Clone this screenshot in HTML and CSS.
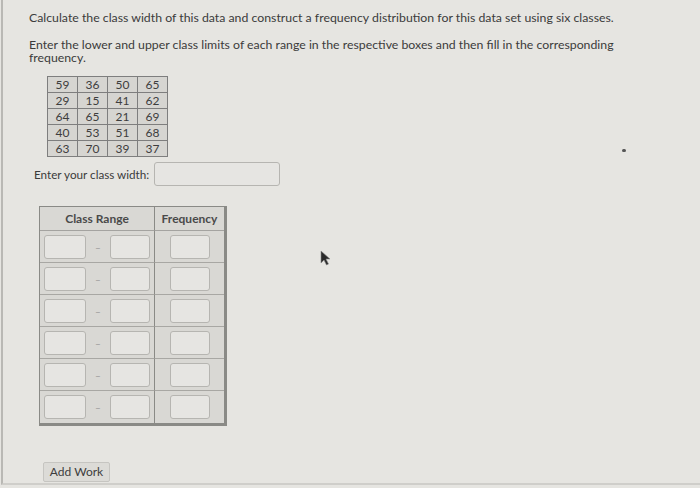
FILE: index.html
```html
<!DOCTYPE html>
<html>
<head>
<meta charset="utf-8">
<link rel="stylesheet" href="styles.css">
</head>
<body>
<div class="page">
  <p class="q1">Calculate the class width of this data and construct a frequency distribution for this data set using six classes.</p>
  <p class="q2">Enter the lower and upper class limits of each range in the respective boxes and then fill in the corresponding frequency.</p>
  <table class="data">
    <tr><td>59</td><td>36</td><td>50</td><td>65</td></tr>
    <tr><td>29</td><td>15</td><td>41</td><td>62</td></tr>
    <tr><td>64</td><td>65</td><td>21</td><td>69</td></tr>
    <tr><td>40</td><td>53</td><td>51</td><td>68</td></tr>
    <tr><td>63</td><td>70</td><td>39</td><td>37</td></tr>
  </table>
  <div class="width-row">
    <span>Enter your class width:</span>
    <div class="box wide"></div>
  </div>
  <table class="freq">
    <tr><th class="cr">Class Range</th><th class="fq">Frequency</th></tr>
    <tr><td class="range"><div class="box lo"></div><span class="dash">–</span><div class="box hi"></div></td><td class="fcell"><div class="box f"></div></td></tr>
    <tr><td class="range"><div class="box lo"></div><span class="dash">–</span><div class="box hi"></div></td><td class="fcell"><div class="box f"></div></td></tr>
    <tr><td class="range"><div class="box lo"></div><span class="dash">–</span><div class="box hi"></div></td><td class="fcell"><div class="box f"></div></td></tr>
    <tr><td class="range"><div class="box lo"></div><span class="dash">–</span><div class="box hi"></div></td><td class="fcell"><div class="box f"></div></td></tr>
    <tr><td class="range"><div class="box lo"></div><span class="dash">–</span><div class="box hi"></div></td><td class="fcell"><div class="box f"></div></td></tr>
    <tr><td class="range"><div class="box lo"></div><span class="dash">–</span><div class="box hi"></div></td><td class="fcell"><div class="box f"></div></td></tr>
  </table>
  <div class="btn">Add Work</div>
  <svg class="cursor" width="12" height="16" viewBox="0 0 12 16"><path d="M1 1 L1 13 L4 10 L6.5 15 L8.5 14 L6 9 L10 9 Z" fill="#2a2a2a" stroke="#888" stroke-width="0.6"/></svg>
  <div class="speck"></div>
</div>
</body>
</html>
```
FILE: styles.css
```css
html, body { margin: 0; padding: 0; }
body {
  width: 700px; height: 488px; overflow: hidden;
  background: #e6e5e1;
  font-family: "Lato", "DejaVu Sans", sans-serif;
  color: #3b3b3b;
}
.page {
  position: relative;
  height: 485px;
  border-left: 2px solid #b9b8b4;
  border-bottom: 2px solid #cfceca;
  margin-left: 1px;
  padding: 11px 0 0 26px;
  box-sizing: border-box;
}
p { margin: 0; font-size: 12.3px; line-height: 13px; }
.q1 { margin-bottom: 14px; }
.q2 { width: 592px; }
.data {
  border-collapse: collapse;
  margin: 12px 0 0 18px;
  background: #d6d5d1;
  border: 1.5px solid #7a7a7a;
}
.data td {
  border: 1px solid #7e7e7e;
  width: 29px;
  height: 15px;
  padding: 0;
  font-size: 12px;
  line-height: 14px;
  text-align: center;
  color: #3d3d3d;
}
.width-row {
  display: flex; align-items: center;
  margin: 5px 0 0 5px;
  font-size: 11.7px;
}
.width-row span { width: 120px; white-space: nowrap; }
.box {
  border: 1px solid #b6b5b1;
  border-radius: 3px;
  background: #e6e5e2;
  box-sizing: border-box;
}
.wide { width: 126px; height: 24px; }
.freq {
  border-collapse: separate;
  border-spacing: 0;
  margin: 20px 0 0 10px;
  border: 1px solid #8a8a86;
  border-right: 3px solid #8a8a86;
  border-bottom: 3px solid #8a8a86;
  background: #d9d8d4;
}
.freq th {
  height: 23px;
  font-size: 12px;
  font-weight: bold;
  color: #4a4a4a;
  padding: 0;
  border-bottom: 1px solid #a4a3a0;
}
.cr { width: 114px; border-right: 1px solid #8a8a86; }
.fq { width: 69px; }
.freq td {
  height: 31px;
  padding: 0;
  border-bottom: 1px solid #a8a7a3;
}
.freq tr:last-child td { border-bottom: none; }
.range {
  border-right: 1px solid #8a8a86;
  display: flex; align-items: center;
  padding: 0 0 0 4px !important;
  height: 32px !important;
  box-sizing: border-box;
}
.lo { width: 42px; height: 24px; }
.hi { width: 40px; height: 24px; }
.dash { width: 24px; text-align: center; font-size: 10px; color: #999; }
.f { width: 40px; height: 24px; margin-left: 15px; }
.btn {
  margin: 36px 0 0 14px;
  width: 67px; height: 20px;
  box-sizing: border-box;
  border: 1px solid #c6c5c1;
  border-radius: 2px;
  background: #dcdbd7;
  font-size: 12px;
  line-height: 18px;
  text-align: center;
  color: #3d3d3d;
}
.cursor { position: absolute; left: 317px; top: 250px; }
.speck { position: absolute; left: 619px; top: 149px; width: 4px; height: 3px; background: #555; border-radius: 2px; }
```
